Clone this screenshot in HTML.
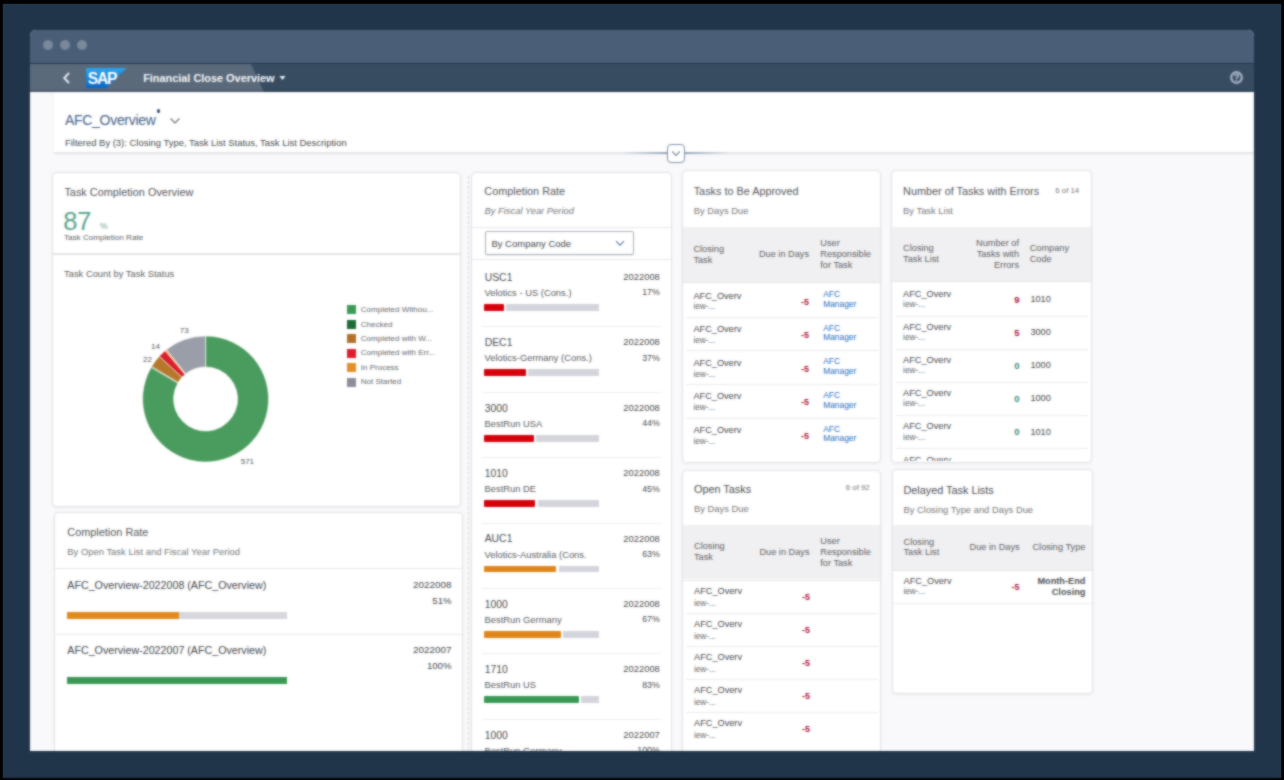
<!DOCTYPE html>
<html><head><meta charset="utf-8">
<style>
*{margin:0;padding:0;box-sizing:border-box}
html,body{width:1284px;height:780px;overflow:hidden;background:#000;font-family:"Liberation Sans",sans-serif;position:relative}
.a{position:absolute}
.t{position:absolute;white-space:nowrap;line-height:1}
.card{position:absolute;background:#fff;border-radius:4px;box-shadow:0 0 0 1px #e3e3e7,0 1px 4px rgba(0,0,0,.09);overflow:hidden}
</style></head>
<body>

<div class="a" style="left:0;top:0;width:1284px;height:780px">
<div class="a" style="left:3px;top:4px;width:1278px;height:774px;background:#22364b;"></div>
<div class="a" style="left:30px;top:30px;width:1224px;height:721px;background:#f9f9fb;border-radius:6px 6px 0 0;"></div>
<div class="a" style="left:30px;top:30px;width:1224px;height:33px;background:#4b5f77;border-radius:6px 6px 0 0;"></div>
<div class="a" style="left:43px;top:40px;width:10px;height:10px;border-radius:50%;background:#7a899b"></div>
<div class="a" style="left:60px;top:40px;width:10px;height:10px;border-radius:50%;background:#7a899b"></div>
<div class="a" style="left:76.5px;top:40px;width:10px;height:10px;border-radius:50%;background:#7a899b"></div>
<div class="a" style="left:30px;top:62.8px;width:1224px;height:1.5px;background:#243458;"></div>
<div class="a" style="left:30px;top:64px;width:1224px;height:28px;background:#384c62;"></div>
<div class="a" style="left:30px;top:64px;width:240px;height:28px;background:#5b6a7c;clip-path:polygon(0 0,221px 0,234px 28px,0 28px)"></div>
<div class="a" style="left:30px;top:90px;width:1224px;height:2px;background:rgba(20,30,50,0.22);"></div>
<svg class="a" style="left:60px;top:70px" width="14" height="16" viewBox="0 0 14 16"><path d="M9 3 L4.3 8 L9 13" fill="none" stroke="#dfe6ee" stroke-width="2.1"/></svg>
<svg class="a" style="left:86.3px;top:67.5px" width="42" height="21" viewBox="0 0 42 21">
<defs><linearGradient id="sapg" x1="0" y1="0" x2="0" y2="1"><stop offset="0" stop-color="#2aa6f0"/><stop offset="1" stop-color="#0b66c6"/></linearGradient></defs>
<polygon points="0,0 40.5,0 20.3,20.2 0,20.2" fill="url(#sapg)"/>
<text x="1.8" y="16.3" font-family="Liberation Sans" font-weight="bold" font-size="15.6" fill="#fff" letter-spacing="-1.2">SAP</text>
</svg>
<div class="t" style="top:72.88px;font-size:10.9px;color:#f4f6f8;font-weight:bold;left:143.20px;">Financial Close Overview</div>
<svg class="a" style="left:279px;top:75.5px" width="7" height="5" viewBox="0 0 7 5"><polygon points="0.5,0 6.5,0 3.5,4" fill="#e8eef4"/></svg>
<svg class="a" style="left:1228.8px;top:70.1px" width="15" height="15" viewBox="0 0 15 15"><circle cx="7.5" cy="7.5" r="5.3" fill="none" stroke="#a3b1c4" stroke-width="2.3"/><path d="M5.4 6.2 Q5.6 4.4 7.5 4.4 Q9.5 4.5 9.4 6 Q9.3 7.2 7.5 7.8 L7.5 9" fill="none" stroke="#a3b1c4" stroke-width="1.6"/><circle cx="7.5" cy="10.6" r="1" fill="#a3b1c4"/></svg>
<div class="a" style="left:54px;top:92px;width:1199px;height:60px;background:#ffffff;box-shadow:0 1px 1px rgba(0,0,0,.10);"></div>
<div class="t" style="top:113.32px;font-size:14px;color:#46638a;letter-spacing:-0.3px;left:65.00px;">AFC_Overview</div>
<div class="a" style="left:156.5px;top:109.3px;width:3.6px;height:3.6px;border-radius:50%;background:#2f4d72"></div>
<svg class="a" style="left:169px;top:117px" width="12" height="8" viewBox="0 0 12 8"><path d="M1.5 1.5 L6 6 L10.5 1.5" fill="none" stroke="#6a7480" stroke-width="1.2"/></svg>
<div class="t" style="top:137.56px;font-size:9.45px;color:#4a4e52;left:65.00px;">Filtered By (3): Closing Type, Task List Status, Task List Description</div>
<div class="a" style="left:54px;top:152px;width:1200px;height:1px;background:#e2e3e6;"></div>
<div class="a" style="left:54px;top:153px;width:1200px;height:1.5px;background:rgba(0,0,0,0.035);"></div>
<div class="a" style="left:622px;top:152px;width:108px;height:1.5px;background:linear-gradient(90deg,rgba(143,160,181,0),rgba(143,160,181,0.9) 40%,rgba(143,160,181,0.9) 60%,rgba(143,160,181,0))"></div>
<div class="a" style="left:667px;top:144px;width:18px;height:18.5px;border:1.6px solid #8193a8;border-radius:4px;background:#fff"></div>
<svg class="a" style="left:670px;top:149.8px" width="12" height="8" viewBox="0 0 12 8"><path d="M2.2 1.5 L6 5.3 L9.8 1.5" fill="none" stroke="#7d8a9a" stroke-width="1.2"/></svg>
<div class="card" style="left:53px;top:173px;width:407px;height:333px"></div>
<div class="t" style="top:187.38px;font-size:10.9px;color:#55585c;left:64.40px;">Task Completion Overview</div>
<div class="t" style="top:209.01px;font-size:25.5px;color:#5ba58d;left:63.20px;">87</div>
<div class="t" style="top:222.00px;font-size:8.5px;color:#6aa895;left:100.00px;">%</div>
<div class="t" style="top:234.49px;font-size:8.1px;color:#606366;left:64.00px;">Task Completion Rate</div>
<div class="a" style="left:53px;top:253px;width:407px;height:1.5px;background:#e4e4e6;"></div>
<div class="t" style="top:268.58px;font-size:9.4px;color:#606366;left:64.00px;">Task Count by Task Status</div>
<svg class="a" style="left:53px;top:173px" width="407" height="333"><path d="M152.60 163.00 A63 63 0 1 1 98.09 194.42 L124.91 209.96 A32 32 0 1 0 152.60 194.00 Z" fill="#4a9b5f" stroke="#fff" stroke-width="0.6"/><path d="M98.09 194.42 A63 63 0 0 1 98.68 193.42 L125.21 209.45 A32 32 0 0 0 124.91 209.96 Z" fill="#2a6d3f" stroke="#fff" stroke-width="0.6"/><path d="M98.68 193.42 A63 63 0 0 1 106.30 183.28 L129.08 204.30 A32 32 0 0 0 125.21 209.45 Z" fill="#b5782a" stroke="#fff" stroke-width="0.6"/><path d="M106.30 183.28 A63 63 0 0 1 112.15 177.70 L132.06 201.47 A32 32 0 0 0 129.08 204.30 Z" fill="#d91f2a" stroke="#fff" stroke-width="0.6"/><path d="M112.15 177.70 A63 63 0 0 1 113.50 176.60 L132.74 200.91 A32 32 0 0 0 132.06 201.47 Z" fill="#e3a04a" stroke="#fff" stroke-width="0.6"/><path d="M113.50 176.60 A63 63 0 0 1 152.60 163.00 L152.60 194.00 A32 32 0 0 0 132.74 200.91 Z" fill="#9a9ea8" stroke="#fff" stroke-width="0.6"/></svg>
<div class="t" style="top:327.24px;font-size:8px;color:#55585c;left:184.20px;transform:translateX(-50%);">73</div>
<div class="t" style="top:342.54px;font-size:8px;color:#55585c;left:155.40px;transform:translateX(-50%);">14</div>
<div class="t" style="top:355.94px;font-size:8px;color:#55585c;left:147.40px;transform:translateX(-50%);">22</div>
<div class="t" style="top:458.24px;font-size:8px;color:#55585c;left:247.40px;transform:translateX(-50%);">571</div>
<div class="a" style="left:347px;top:305.1px;width:9.399999999999977px;height:9.399999999999977px;background:#3d9a57;"></div>
<div class="t" style="top:306.04px;font-size:8px;color:#67696c;left:360.80px;">Completed Withou...</div>
<div class="a" style="left:347px;top:319.6px;width:9.399999999999977px;height:9.399999999999977px;background:#1f6a3a;"></div>
<div class="t" style="top:320.52px;font-size:8px;color:#67696c;left:360.80px;">Checked</div>
<div class="a" style="left:347px;top:334.1px;width:9.399999999999977px;height:9.399999999999977px;background:#b3702a;"></div>
<div class="t" style="top:335.00px;font-size:8px;color:#67696c;left:360.80px;">Completed with W...</div>
<div class="a" style="left:347px;top:348.5px;width:9.399999999999977px;height:9.399999999999977px;background:#e01d2c;"></div>
<div class="t" style="top:349.48px;font-size:8px;color:#67696c;left:360.80px;">Completed with Err...</div>
<div class="a" style="left:347px;top:363.0px;width:9.399999999999977px;height:9.399999999999977px;background:#e3902a;"></div>
<div class="t" style="top:363.96px;font-size:8px;color:#67696c;left:360.80px;">In Process</div>
<div class="a" style="left:347px;top:377.5px;width:9.399999999999977px;height:9.399999999999977px;background:#8b8e98;"></div>
<div class="t" style="top:378.44px;font-size:8px;color:#67696c;left:360.80px;">Not Started</div>
<div class="card" style="left:55px;top:513px;width:407px;height:260px"></div>
<div class="t" style="top:526.68px;font-size:10.9px;color:#55585c;left:67.30px;">Completion Rate</div>
<div class="t" style="top:546.97px;font-size:9.43px;color:#77797c;left:67.30px;">By Open Task List and Fiscal Year Period</div>
<div class="a" style="left:55px;top:568px;width:407px;height:1px;background:#e8e8ea;"></div>
<div class="t" style="top:579.57px;font-size:10.7px;color:#46494d;left:67.30px;">AFC_Overview-2022008 (AFC_Overview)</div>
<div class="t" style="top:580.15px;font-size:9.9px;color:#46494d;right:832.50px;">2022008</div>
<div class="t" style="top:596.29px;font-size:9.6px;color:#46494d;right:832.50px;">51%</div>
<div class="a" style="left:67px;top:611.5px;width:220px;height:7.2000000000000455px;background:#d7d7de;"></div>
<div class="a" style="left:67px;top:611.5px;width:111.9px;height:7.2000000000000455px;background:#e08a1f;"></div>
<div class="a" style="left:55px;top:633.5px;width:407px;height:1.0px;background:#ececee;"></div>
<div class="t" style="top:644.57px;font-size:10.7px;color:#46494d;left:67.30px;">AFC_Overview-2022007 (AFC_Overview)</div>
<div class="t" style="top:645.15px;font-size:9.9px;color:#46494d;right:832.50px;">2022007</div>
<div class="t" style="top:661.29px;font-size:9.6px;color:#46494d;right:832.50px;">100%</div>
<div class="a" style="left:67px;top:676.5px;width:220px;height:7.2000000000000455px;background:#d7d7de;"></div>
<div class="a" style="left:67px;top:676.5px;width:219.60000000000002px;height:7.2000000000000455px;background:#3a9a55;"></div>
<div class="card" style="left:472px;top:172.5px;width:199px;height:600px"></div>
<div class="t" style="top:185.90px;font-size:10.85px;color:#55585c;left:484.30px;">Completion Rate</div>
<div class="t" style="top:206.08px;font-size:9.4px;color:#77797c;font-style:italic;left:484.50px;">By Fiscal Year Period</div>
<div class="a" style="left:472px;top:227px;width:199px;height:1px;background:#e8e8ea;"></div>
<div class="a" style="left:484.5px;top:230.8px;width:149.5px;height:24.4px;border:1px solid #a9b0b8;border-radius:2px;box-shadow:0 1px 1px rgba(0,0,0,.08)"></div>
<div class="t" style="top:238.53px;font-size:9.5px;color:#46494d;left:491.40px;">By Company Code</div>
<svg class="a" style="left:615px;top:240px" width="10" height="7" viewBox="0 0 10 7"><path d="M1 1.2 L5 5.2 L9 1.2" fill="none" stroke="#5a7e9e" stroke-width="1.2"/></svg>
<div class="a" style="left:472px;top:259px;width:199px;height:1px;background:#e8e8ea;"></div>
<div class="t" style="top:272.71px;font-size:10.4px;color:#46494d;left:484.70px;">USC1</div>
<div class="t" style="top:272.08px;font-size:9.4px;color:#46494d;right:624.20px;">2022008</div>
<div class="t" style="top:287.98px;font-size:9.4px;color:#55585c;left:484.50px;">Velotics - US (Cons.)</div>
<div class="t" style="top:288.36px;font-size:8.8px;color:#46494d;right:624.20px;">17%</div>
<div class="a" style="left:506px;top:304.0px;width:92.5px;height:6.899999999999977px;background:#d5d5dc;"></div>
<div class="a" style="left:484.2px;top:304.0px;width:19.80000000000001px;height:6.899999999999977px;background:#d6000c;border-radius:1px;"></div>
<div class="a" style="left:482px;top:326.3px;width:179px;height:1.0px;background:#eeeef0;"></div>
<div class="t" style="top:338.11px;font-size:10.4px;color:#46494d;left:484.70px;">DEC1</div>
<div class="t" style="top:337.48px;font-size:9.4px;color:#46494d;right:624.20px;">2022008</div>
<div class="t" style="top:353.38px;font-size:9.4px;color:#55585c;left:484.50px;">Velotics-Germany (Cons.)</div>
<div class="t" style="top:353.76px;font-size:8.8px;color:#46494d;right:624.20px;">37%</div>
<div class="a" style="left:528px;top:369.4px;width:70.5px;height:6.899999999999977px;background:#d5d5dc;"></div>
<div class="a" style="left:484.2px;top:369.4px;width:41.80000000000001px;height:6.899999999999977px;background:#d6000c;border-radius:1px;"></div>
<div class="a" style="left:482px;top:391.70000000000005px;width:179px;height:1.0px;background:#eeeef0;"></div>
<div class="t" style="top:403.51px;font-size:10.4px;color:#46494d;left:484.70px;">3000</div>
<div class="t" style="top:402.88px;font-size:9.4px;color:#46494d;right:624.20px;">2022008</div>
<div class="t" style="top:418.78px;font-size:9.4px;color:#55585c;left:484.50px;">BestRun USA</div>
<div class="t" style="top:419.16px;font-size:8.8px;color:#46494d;right:624.20px;">44%</div>
<div class="a" style="left:536px;top:434.8px;width:62.5px;height:6.899999999999977px;background:#d5d5dc;"></div>
<div class="a" style="left:484.2px;top:434.8px;width:49.80000000000001px;height:6.899999999999977px;background:#d6000c;border-radius:1px;"></div>
<div class="a" style="left:482px;top:457.1px;width:179px;height:1.0px;background:#eeeef0;"></div>
<div class="t" style="top:468.91px;font-size:10.4px;color:#46494d;left:484.70px;">1010</div>
<div class="t" style="top:468.28px;font-size:9.4px;color:#46494d;right:624.20px;">2022008</div>
<div class="t" style="top:484.18px;font-size:9.4px;color:#55585c;left:484.50px;">BestRun DE</div>
<div class="t" style="top:484.56px;font-size:8.8px;color:#46494d;right:624.20px;">45%</div>
<div class="a" style="left:537.5px;top:500.20000000000005px;width:61.0px;height:6.899999999999977px;background:#d5d5dc;"></div>
<div class="a" style="left:484.2px;top:500.20000000000005px;width:51.30000000000001px;height:6.899999999999977px;background:#d6000c;border-radius:1px;"></div>
<div class="a" style="left:482px;top:522.5px;width:179px;height:1.0px;background:#eeeef0;"></div>
<div class="t" style="top:534.31px;font-size:10.4px;color:#46494d;left:484.70px;">AUC1</div>
<div class="t" style="top:533.68px;font-size:9.4px;color:#46494d;right:624.20px;">2022008</div>
<div class="t" style="top:549.58px;font-size:9.4px;color:#55585c;left:484.50px;">Velotics-Australia (Cons.</div>
<div class="t" style="top:549.96px;font-size:8.8px;color:#46494d;right:624.20px;">63%</div>
<div class="a" style="left:558.5px;top:565.6px;width:40.0px;height:6.899999999999977px;background:#d5d5dc;"></div>
<div class="a" style="left:484.2px;top:565.6px;width:72.30000000000001px;height:6.899999999999977px;background:#e0861a;border-radius:1px;"></div>
<div class="a" style="left:482px;top:587.9000000000001px;width:179px;height:1.0px;background:#eeeef0;"></div>
<div class="t" style="top:599.71px;font-size:10.4px;color:#46494d;left:484.70px;">1000</div>
<div class="t" style="top:599.08px;font-size:9.4px;color:#46494d;right:624.20px;">2022008</div>
<div class="t" style="top:614.98px;font-size:9.4px;color:#55585c;left:484.50px;">BestRun Germany</div>
<div class="t" style="top:615.36px;font-size:8.8px;color:#46494d;right:624.20px;">67%</div>
<div class="a" style="left:563px;top:631.0px;width:35.5px;height:6.899999999999977px;background:#d5d5dc;"></div>
<div class="a" style="left:484.2px;top:631.0px;width:76.80000000000001px;height:6.899999999999977px;background:#e0861a;border-radius:1px;"></div>
<div class="a" style="left:482px;top:653.3px;width:179px;height:1.0px;background:#eeeef0;"></div>
<div class="t" style="top:665.11px;font-size:10.4px;color:#46494d;left:484.70px;">1710</div>
<div class="t" style="top:664.48px;font-size:9.4px;color:#46494d;right:624.20px;">2022008</div>
<div class="t" style="top:680.38px;font-size:9.4px;color:#55585c;left:484.50px;">BestRun US</div>
<div class="t" style="top:680.76px;font-size:8.8px;color:#46494d;right:624.20px;">83%</div>
<div class="a" style="left:581px;top:696.4000000000001px;width:17.5px;height:6.899999999999864px;background:#d5d5dc;"></div>
<div class="a" style="left:484.2px;top:696.4000000000001px;width:94.80000000000001px;height:6.899999999999864px;background:#3a9a55;border-radius:1px;"></div>
<div class="a" style="left:482px;top:718.7px;width:179px;height:1.0px;background:#eeeef0;"></div>
<div class="t" style="top:730.51px;font-size:10.4px;color:#46494d;left:484.70px;">1000</div>
<div class="t" style="top:729.88px;font-size:9.4px;color:#46494d;right:624.20px;">2022007</div>
<div class="t" style="top:745.78px;font-size:9.4px;color:#55585c;left:484.50px;">BestRun Germany</div>
<div class="t" style="top:746.16px;font-size:8.8px;color:#46494d;right:624.20px;">100%</div>
<div class="a" style="left:601px;top:761.8000000000001px;width:-2.5px;height:6.899999999999977px;background:#d5d5dc;"></div>
<div class="a" style="left:484.2px;top:761.8000000000001px;width:114.80000000000001px;height:6.899999999999977px;background:#3a9a55;border-radius:1px;"></div>
<div class="a" style="left:482px;top:784.1000000000001px;width:179px;height:1.0px;background:#eeeef0;"></div>
<div class="card" style="left:682.5px;top:171px;width:197.7px;height:291px"></div>
<div class="t" style="top:185.50px;font-size:10.85px;color:#55585c;left:693.70px;">Tasks to Be Approved</div>
<div class="t" style="top:206.08px;font-size:9.4px;color:#77797c;left:693.70px;">By Days Due</div>
<div class="a" style="left:682.5px;top:226.5px;width:197.70000000000005px;height:56.0px;background:#f0f0f2;"></div>
<div class="a" style="left:682.5px;top:282px;width:197.70000000000005px;height:1px;background:#e4e4e8;"></div>
<div class="t" style="top:244.68px;font-size:9.2px;color:#5f6266;left:693.40px;">Closing</div>
<div class="t" style="top:255.68px;font-size:9.2px;color:#5f6266;left:693.40px;">Task</div>
<div class="t" style="top:250.18px;font-size:9.2px;color:#5f6266;right:475.00px;">Due in Days</div>
<div class="t" style="top:238.68px;font-size:9.2px;color:#5f6266;left:820.30px;">User</div>
<div class="t" style="top:250.18px;font-size:9.2px;color:#5f6266;left:820.30px;">Responsible</div>
<div class="t" style="top:261.18px;font-size:9.2px;color:#5f6266;left:820.30px;">for Task</div>
<div class="t" style="top:291.68px;font-size:9.2px;color:#46494d;left:693.40px;">AFC_Overv</div>
<div class="t" style="top:303.45px;font-size:8.2px;color:#65686b;left:693.40px;">iew-...</div>
<div class="t" style="top:297.57px;font-size:9px;color:#b01840;font-weight:bold;right:475.00px;">-5</div>
<div class="t" style="top:290.25px;font-size:8.4px;color:#2a6fc4;left:823.20px;">AFC</div>
<div class="t" style="top:299.75px;font-size:8.4px;color:#2a6fc4;left:823.20px;">Manager</div>
<div class="a" style="left:686px;top:316.8px;width:192px;height:1.0px;background:#ececee;"></div>
<div class="t" style="top:325.28px;font-size:9.2px;color:#46494d;left:693.40px;">AFC_Overv</div>
<div class="t" style="top:337.05px;font-size:8.2px;color:#65686b;left:693.40px;">iew-...</div>
<div class="t" style="top:331.17px;font-size:9px;color:#b01840;font-weight:bold;right:475.00px;">-5</div>
<div class="t" style="top:323.85px;font-size:8.4px;color:#2a6fc4;left:823.20px;">AFC</div>
<div class="t" style="top:333.35px;font-size:8.4px;color:#2a6fc4;left:823.20px;">Manager</div>
<div class="a" style="left:686px;top:350.40000000000003px;width:192px;height:1.0px;background:#ececee;"></div>
<div class="t" style="top:358.88px;font-size:9.2px;color:#46494d;left:693.40px;">AFC_Overv</div>
<div class="t" style="top:370.65px;font-size:8.2px;color:#65686b;left:693.40px;">iew-...</div>
<div class="t" style="top:364.77px;font-size:9px;color:#b01840;font-weight:bold;right:475.00px;">-5</div>
<div class="t" style="top:357.45px;font-size:8.4px;color:#2a6fc4;left:823.20px;">AFC</div>
<div class="t" style="top:366.95px;font-size:8.4px;color:#2a6fc4;left:823.20px;">Manager</div>
<div class="a" style="left:686px;top:384.0px;width:192px;height:1.0px;background:#ececee;"></div>
<div class="t" style="top:392.48px;font-size:9.2px;color:#46494d;left:693.40px;">AFC_Overv</div>
<div class="t" style="top:404.25px;font-size:8.2px;color:#65686b;left:693.40px;">iew-...</div>
<div class="t" style="top:398.37px;font-size:9px;color:#b01840;font-weight:bold;right:475.00px;">-5</div>
<div class="t" style="top:391.05px;font-size:8.4px;color:#2a6fc4;left:823.20px;">AFC</div>
<div class="t" style="top:400.55px;font-size:8.4px;color:#2a6fc4;left:823.20px;">Manager</div>
<div class="a" style="left:686px;top:417.6px;width:192px;height:1.0px;background:#ececee;"></div>
<div class="t" style="top:426.08px;font-size:9.2px;color:#46494d;left:693.40px;">AFC_Overv</div>
<div class="t" style="top:437.85px;font-size:8.2px;color:#65686b;left:693.40px;">iew-...</div>
<div class="t" style="top:431.97px;font-size:9px;color:#b01840;font-weight:bold;right:475.00px;">-5</div>
<div class="t" style="top:424.65px;font-size:8.4px;color:#2a6fc4;left:823.20px;">AFC</div>
<div class="t" style="top:434.15px;font-size:8.4px;color:#2a6fc4;left:823.20px;">Manager</div>
<div class="card" style="left:892.3px;top:171px;width:199.2px;height:291px"></div>
<div class="a" style="left:0;top:0;width:1284px;height:780px;clip-path:inset(171px 192.5px 319.2px 892.3px)">
<div class="t" style="top:185.90px;font-size:10.85px;color:#55585c;left:903.10px;">Number of Tasks with Errors</div>
<div class="t" style="top:186.83px;font-size:7.8px;color:#77797c;right:204.80px;">6 of 14</div>
<div class="t" style="top:205.98px;font-size:9.4px;color:#77797c;left:903.10px;">By Task List</div>
<div class="a" style="left:892.3px;top:226.9px;width:199.20000000000005px;height:54.29999999999998px;background:#f0f0f2;"></div>
<div class="a" style="left:892.3px;top:281px;width:199.20000000000005px;height:1px;background:#e4e4e8;"></div>
<div class="t" style="top:244.48px;font-size:9.2px;color:#5f6266;left:903.10px;">Closing</div>
<div class="t" style="top:255.28px;font-size:9.2px;color:#5f6266;left:903.10px;">Task List</div>
<div class="t" style="top:239.38px;font-size:9.2px;color:#5f6266;right:265.00px;">Number of</div>
<div class="t" style="top:250.18px;font-size:9.2px;color:#5f6266;right:265.00px;">Tasks with</div>
<div class="t" style="top:261.38px;font-size:9.2px;color:#5f6266;right:265.00px;">Errors</div>
<div class="t" style="top:244.48px;font-size:9.2px;color:#5f6266;left:1029.70px;">Company</div>
<div class="t" style="top:255.28px;font-size:9.2px;color:#5f6266;left:1029.70px;">Code</div>
<div class="t" style="top:289.88px;font-size:9.2px;color:#46494d;left:903.10px;">AFC_Overv</div>
<div class="t" style="top:301.15px;font-size:8.2px;color:#65686b;left:903.10px;">iew-...</div>
<div class="t" style="top:295.04px;font-size:9.5px;color:#b01840;font-weight:bold;right:264.50px;">9</div>
<div class="t" style="top:295.18px;font-size:9.2px;color:#46494d;left:1030.40px;">1010</div>
<div class="a" style="left:896px;top:316.0px;width:192px;height:1.0px;background:#ececee;"></div>
<div class="t" style="top:322.98px;font-size:9.2px;color:#46494d;left:903.10px;">AFC_Overv</div>
<div class="t" style="top:334.25px;font-size:8.2px;color:#65686b;left:903.10px;">iew-...</div>
<div class="t" style="top:328.14px;font-size:9.5px;color:#b01840;font-weight:bold;right:264.50px;">5</div>
<div class="t" style="top:328.28px;font-size:9.2px;color:#46494d;left:1030.40px;">3000</div>
<div class="a" style="left:896px;top:349.1px;width:192px;height:1.0px;background:#ececee;"></div>
<div class="t" style="top:356.08px;font-size:9.2px;color:#46494d;left:903.10px;">AFC_Overv</div>
<div class="t" style="top:367.35px;font-size:8.2px;color:#65686b;left:903.10px;">iew-...</div>
<div class="t" style="top:361.24px;font-size:9.5px;color:#3d8a78;font-weight:bold;right:264.50px;">0</div>
<div class="t" style="top:361.38px;font-size:9.2px;color:#46494d;left:1030.40px;">1000</div>
<div class="a" style="left:896px;top:382.2px;width:192px;height:1.0px;background:#ececee;"></div>
<div class="t" style="top:389.18px;font-size:9.2px;color:#46494d;left:903.10px;">AFC_Overv</div>
<div class="t" style="top:400.45px;font-size:8.2px;color:#65686b;left:903.10px;">iew-...</div>
<div class="t" style="top:394.34px;font-size:9.5px;color:#3d8a78;font-weight:bold;right:264.50px;">0</div>
<div class="t" style="top:394.48px;font-size:9.2px;color:#46494d;left:1030.40px;">1000</div>
<div class="a" style="left:896px;top:415.3px;width:192px;height:1.0px;background:#ececee;"></div>
<div class="t" style="top:422.28px;font-size:9.2px;color:#46494d;left:903.10px;">AFC_Overv</div>
<div class="t" style="top:433.55px;font-size:8.2px;color:#65686b;left:903.10px;">iew-...</div>
<div class="t" style="top:427.44px;font-size:9.5px;color:#3d8a78;font-weight:bold;right:264.50px;">0</div>
<div class="t" style="top:427.58px;font-size:9.2px;color:#46494d;left:1030.40px;">1010</div>
<div class="a" style="left:896px;top:448.4px;width:192px;height:1.0px;background:#ececee;"></div>
<div class="t" style="top:456.38px;font-size:9.2px;color:#46494d;left:903.10px;">AFC_Overv</div>
<div class="t" style="top:466.65px;font-size:8.2px;color:#65686b;left:903.10px;">iew-...</div>
<div class="t" style="top:460.54px;font-size:9.5px;color:#3d8a78;font-weight:bold;right:264.50px;">0</div>
<div class="t" style="top:460.68px;font-size:9.2px;color:#46494d;left:1030.40px;">1000</div>
</div>
<div class="card" style="left:682.5px;top:470.5px;width:197.7px;height:300px"></div>
<div class="t" style="top:483.90px;font-size:10.85px;color:#4c4f53;left:694.00px;">Open Tasks</div>
<div class="t" style="top:484.33px;font-size:7.8px;color:#77797c;right:414.30px;">6 of 92</div>
<div class="t" style="top:504.18px;font-size:9.4px;color:#77797c;left:694.00px;">By Days Due</div>
<div class="a" style="left:682.5px;top:525.3px;width:197.70000000000005px;height:54.200000000000045px;background:#f0f0f2;"></div>
<div class="a" style="left:682.5px;top:579.5px;width:197.70000000000005px;height:1.0px;background:#e4e4e8;"></div>
<div class="t" style="top:541.98px;font-size:9.2px;color:#5f6266;left:694.00px;">Closing</div>
<div class="t" style="top:552.88px;font-size:9.2px;color:#5f6266;left:694.00px;">Task</div>
<div class="t" style="top:547.68px;font-size:9.2px;color:#5f6266;right:474.50px;">Due in Days</div>
<div class="t" style="top:536.58px;font-size:9.2px;color:#5f6266;left:820.30px;">User</div>
<div class="t" style="top:547.68px;font-size:9.2px;color:#5f6266;left:820.30px;">Responsible</div>
<div class="t" style="top:559.18px;font-size:9.2px;color:#5f6266;left:820.30px;">for Task</div>
<div class="t" style="top:587.28px;font-size:9.2px;color:#46494d;left:694.00px;">AFC_Overv</div>
<div class="t" style="top:599.95px;font-size:8.2px;color:#65686b;left:694.00px;">iew-...</div>
<div class="t" style="top:593.17px;font-size:9px;color:#b01840;font-weight:bold;right:474.00px;">-5</div>
<div class="a" style="left:686px;top:612.6px;width:192px;height:1.0px;background:#ececee;"></div>
<div class="t" style="top:620.28px;font-size:9.2px;color:#46494d;left:694.00px;">AFC_Overv</div>
<div class="t" style="top:632.95px;font-size:8.2px;color:#65686b;left:694.00px;">iew-...</div>
<div class="t" style="top:626.17px;font-size:9px;color:#b01840;font-weight:bold;right:474.00px;">-5</div>
<div class="a" style="left:686px;top:645.6px;width:192px;height:1.0px;background:#ececee;"></div>
<div class="t" style="top:653.28px;font-size:9.2px;color:#46494d;left:694.00px;">AFC_Overv</div>
<div class="t" style="top:665.95px;font-size:8.2px;color:#65686b;left:694.00px;">iew-...</div>
<div class="t" style="top:659.17px;font-size:9px;color:#b01840;font-weight:bold;right:474.00px;">-5</div>
<div class="a" style="left:686px;top:678.6px;width:192px;height:1.0px;background:#ececee;"></div>
<div class="t" style="top:686.28px;font-size:9.2px;color:#46494d;left:694.00px;">AFC_Overv</div>
<div class="t" style="top:698.95px;font-size:8.2px;color:#65686b;left:694.00px;">iew-...</div>
<div class="t" style="top:692.17px;font-size:9px;color:#b01840;font-weight:bold;right:474.00px;">-5</div>
<div class="a" style="left:686px;top:711.6px;width:192px;height:1.0px;background:#ececee;"></div>
<div class="t" style="top:719.28px;font-size:9.2px;color:#46494d;left:694.00px;">AFC_Overv</div>
<div class="t" style="top:731.95px;font-size:8.2px;color:#65686b;left:694.00px;">iew-...</div>
<div class="t" style="top:725.17px;font-size:9px;color:#b01840;font-weight:bold;right:474.00px;">-5</div>
<div class="card" style="left:893px;top:469.5px;width:199px;height:223.5px"></div>
<div class="t" style="top:484.60px;font-size:10.85px;color:#4c4f53;left:903.50px;">Delayed Task Lists</div>
<div class="t" style="top:505.18px;font-size:9.4px;color:#77797c;left:903.50px;">By Closing Type and Days Due</div>
<div class="a" style="left:893px;top:525.3px;width:199px;height:44.700000000000045px;background:#f0f0f2;"></div>
<div class="a" style="left:893px;top:570px;width:199px;height:1px;background:#e4e4e8;"></div>
<div class="t" style="top:537.58px;font-size:9.2px;color:#5f6266;left:903.50px;">Closing</div>
<div class="t" style="top:548.08px;font-size:9.2px;color:#5f6266;left:903.50px;">Task List</div>
<div class="t" style="top:542.68px;font-size:9.2px;color:#5f6266;right:264.40px;">Due in Days</div>
<div class="t" style="top:542.68px;font-size:9.2px;color:#5f6266;right:198.60px;">Closing Type</div>
<div class="t" style="top:576.68px;font-size:9.2px;color:#46494d;left:903.50px;">AFC_Overv</div>
<div class="t" style="top:587.75px;font-size:8.2px;color:#65686b;left:903.50px;">iew-...</div>
<div class="t" style="top:582.77px;font-size:9px;color:#b01840;font-weight:bold;right:264.50px;">-5</div>
<div class="t" style="top:576.68px;font-size:9.2px;color:#505357;font-weight:bold;right:198.60px;">Month-End</div>
<div class="t" style="top:587.68px;font-size:9.2px;color:#505357;font-weight:bold;right:198.60px;">Closing</div>
<div class="a" style="left:893px;top:602.5px;width:199px;height:1.0px;background:#ececee;"></div>
<div class="a" style="left:467.5px;top:176px;width:1px;height:574px;border-left:1px dashed #d9d9df"></div>
<div class="a" style="left:3px;top:751px;width:1278px;height:27px;background:#22364b;"></div>
<div class="a" style="left:30px;top:751px;width:1224px;height:1px;background:#1c2e44;"></div>
<div class="a" style="left:0px;top:778px;width:1284px;height:2px;background:#000;"></div>
</div>
<div class="a" style="left:0;top:0;width:1284px;height:780px;filter:blur(0.8px);opacity:0.7">
<div class="a" style="left:3px;top:4px;width:1278px;height:774px;background:#22364b;"></div>
<div class="a" style="left:30px;top:30px;width:1224px;height:721px;background:#f9f9fb;border-radius:6px 6px 0 0;"></div>
<div class="a" style="left:30px;top:30px;width:1224px;height:33px;background:#4b5f77;border-radius:6px 6px 0 0;"></div>
<div class="a" style="left:43px;top:40px;width:10px;height:10px;border-radius:50%;background:#7a899b"></div>
<div class="a" style="left:60px;top:40px;width:10px;height:10px;border-radius:50%;background:#7a899b"></div>
<div class="a" style="left:76.5px;top:40px;width:10px;height:10px;border-radius:50%;background:#7a899b"></div>
<div class="a" style="left:30px;top:62.8px;width:1224px;height:1.5px;background:#243458;"></div>
<div class="a" style="left:30px;top:64px;width:1224px;height:28px;background:#384c62;"></div>
<div class="a" style="left:30px;top:64px;width:240px;height:28px;background:#5b6a7c;clip-path:polygon(0 0,221px 0,234px 28px,0 28px)"></div>
<div class="a" style="left:30px;top:90px;width:1224px;height:2px;background:rgba(20,30,50,0.22);"></div>
<svg class="a" style="left:60px;top:70px" width="14" height="16" viewBox="0 0 14 16"><path d="M9 3 L4.3 8 L9 13" fill="none" stroke="#dfe6ee" stroke-width="2.1"/></svg>
<svg class="a" style="left:86.3px;top:67.5px" width="42" height="21" viewBox="0 0 42 21">
<defs><linearGradient id="sapg" x1="0" y1="0" x2="0" y2="1"><stop offset="0" stop-color="#2aa6f0"/><stop offset="1" stop-color="#0b66c6"/></linearGradient></defs>
<polygon points="0,0 40.5,0 20.3,20.2 0,20.2" fill="url(#sapg)"/>
<text x="1.8" y="16.3" font-family="Liberation Sans" font-weight="bold" font-size="15.6" fill="#fff" letter-spacing="-1.2">SAP</text>
</svg>
<div class="t" style="top:72.88px;font-size:10.9px;color:#f4f6f8;font-weight:bold;left:143.20px;">Financial Close Overview</div>
<svg class="a" style="left:279px;top:75.5px" width="7" height="5" viewBox="0 0 7 5"><polygon points="0.5,0 6.5,0 3.5,4" fill="#e8eef4"/></svg>
<svg class="a" style="left:1228.8px;top:70.1px" width="15" height="15" viewBox="0 0 15 15"><circle cx="7.5" cy="7.5" r="5.3" fill="none" stroke="#a3b1c4" stroke-width="2.3"/><path d="M5.4 6.2 Q5.6 4.4 7.5 4.4 Q9.5 4.5 9.4 6 Q9.3 7.2 7.5 7.8 L7.5 9" fill="none" stroke="#a3b1c4" stroke-width="1.6"/><circle cx="7.5" cy="10.6" r="1" fill="#a3b1c4"/></svg>
<div class="a" style="left:54px;top:92px;width:1199px;height:60px;background:#ffffff;box-shadow:0 1px 1px rgba(0,0,0,.10);"></div>
<div class="t" style="top:113.32px;font-size:14px;color:#46638a;letter-spacing:-0.3px;left:65.00px;">AFC_Overview</div>
<div class="a" style="left:156.5px;top:109.3px;width:3.6px;height:3.6px;border-radius:50%;background:#2f4d72"></div>
<svg class="a" style="left:169px;top:117px" width="12" height="8" viewBox="0 0 12 8"><path d="M1.5 1.5 L6 6 L10.5 1.5" fill="none" stroke="#6a7480" stroke-width="1.2"/></svg>
<div class="t" style="top:137.56px;font-size:9.45px;color:#4a4e52;left:65.00px;">Filtered By (3): Closing Type, Task List Status, Task List Description</div>
<div class="a" style="left:54px;top:152px;width:1200px;height:1px;background:#e2e3e6;"></div>
<div class="a" style="left:54px;top:153px;width:1200px;height:1.5px;background:rgba(0,0,0,0.035);"></div>
<div class="a" style="left:622px;top:152px;width:108px;height:1.5px;background:linear-gradient(90deg,rgba(143,160,181,0),rgba(143,160,181,0.9) 40%,rgba(143,160,181,0.9) 60%,rgba(143,160,181,0))"></div>
<div class="a" style="left:667px;top:144px;width:18px;height:18.5px;border:1.6px solid #8193a8;border-radius:4px;background:#fff"></div>
<svg class="a" style="left:670px;top:149.8px" width="12" height="8" viewBox="0 0 12 8"><path d="M2.2 1.5 L6 5.3 L9.8 1.5" fill="none" stroke="#7d8a9a" stroke-width="1.2"/></svg>
<div class="card" style="left:53px;top:173px;width:407px;height:333px"></div>
<div class="t" style="top:187.38px;font-size:10.9px;color:#55585c;left:64.40px;">Task Completion Overview</div>
<div class="t" style="top:209.01px;font-size:25.5px;color:#5ba58d;left:63.20px;">87</div>
<div class="t" style="top:222.00px;font-size:8.5px;color:#6aa895;left:100.00px;">%</div>
<div class="t" style="top:234.49px;font-size:8.1px;color:#606366;left:64.00px;">Task Completion Rate</div>
<div class="a" style="left:53px;top:253px;width:407px;height:1.5px;background:#e4e4e6;"></div>
<div class="t" style="top:268.58px;font-size:9.4px;color:#606366;left:64.00px;">Task Count by Task Status</div>
<svg class="a" style="left:53px;top:173px" width="407" height="333"><path d="M152.60 163.00 A63 63 0 1 1 98.09 194.42 L124.91 209.96 A32 32 0 1 0 152.60 194.00 Z" fill="#4a9b5f" stroke="#fff" stroke-width="0.6"/><path d="M98.09 194.42 A63 63 0 0 1 98.68 193.42 L125.21 209.45 A32 32 0 0 0 124.91 209.96 Z" fill="#2a6d3f" stroke="#fff" stroke-width="0.6"/><path d="M98.68 193.42 A63 63 0 0 1 106.30 183.28 L129.08 204.30 A32 32 0 0 0 125.21 209.45 Z" fill="#b5782a" stroke="#fff" stroke-width="0.6"/><path d="M106.30 183.28 A63 63 0 0 1 112.15 177.70 L132.06 201.47 A32 32 0 0 0 129.08 204.30 Z" fill="#d91f2a" stroke="#fff" stroke-width="0.6"/><path d="M112.15 177.70 A63 63 0 0 1 113.50 176.60 L132.74 200.91 A32 32 0 0 0 132.06 201.47 Z" fill="#e3a04a" stroke="#fff" stroke-width="0.6"/><path d="M113.50 176.60 A63 63 0 0 1 152.60 163.00 L152.60 194.00 A32 32 0 0 0 132.74 200.91 Z" fill="#9a9ea8" stroke="#fff" stroke-width="0.6"/></svg>
<div class="t" style="top:327.24px;font-size:8px;color:#55585c;left:184.20px;transform:translateX(-50%);">73</div>
<div class="t" style="top:342.54px;font-size:8px;color:#55585c;left:155.40px;transform:translateX(-50%);">14</div>
<div class="t" style="top:355.94px;font-size:8px;color:#55585c;left:147.40px;transform:translateX(-50%);">22</div>
<div class="t" style="top:458.24px;font-size:8px;color:#55585c;left:247.40px;transform:translateX(-50%);">571</div>
<div class="a" style="left:347px;top:305.1px;width:9.399999999999977px;height:9.399999999999977px;background:#3d9a57;"></div>
<div class="t" style="top:306.04px;font-size:8px;color:#67696c;left:360.80px;">Completed Withou...</div>
<div class="a" style="left:347px;top:319.6px;width:9.399999999999977px;height:9.399999999999977px;background:#1f6a3a;"></div>
<div class="t" style="top:320.52px;font-size:8px;color:#67696c;left:360.80px;">Checked</div>
<div class="a" style="left:347px;top:334.1px;width:9.399999999999977px;height:9.399999999999977px;background:#b3702a;"></div>
<div class="t" style="top:335.00px;font-size:8px;color:#67696c;left:360.80px;">Completed with W...</div>
<div class="a" style="left:347px;top:348.5px;width:9.399999999999977px;height:9.399999999999977px;background:#e01d2c;"></div>
<div class="t" style="top:349.48px;font-size:8px;color:#67696c;left:360.80px;">Completed with Err...</div>
<div class="a" style="left:347px;top:363.0px;width:9.399999999999977px;height:9.399999999999977px;background:#e3902a;"></div>
<div class="t" style="top:363.96px;font-size:8px;color:#67696c;left:360.80px;">In Process</div>
<div class="a" style="left:347px;top:377.5px;width:9.399999999999977px;height:9.399999999999977px;background:#8b8e98;"></div>
<div class="t" style="top:378.44px;font-size:8px;color:#67696c;left:360.80px;">Not Started</div>
<div class="card" style="left:55px;top:513px;width:407px;height:260px"></div>
<div class="t" style="top:526.68px;font-size:10.9px;color:#55585c;left:67.30px;">Completion Rate</div>
<div class="t" style="top:546.97px;font-size:9.43px;color:#77797c;left:67.30px;">By Open Task List and Fiscal Year Period</div>
<div class="a" style="left:55px;top:568px;width:407px;height:1px;background:#e8e8ea;"></div>
<div class="t" style="top:579.57px;font-size:10.7px;color:#46494d;left:67.30px;">AFC_Overview-2022008 (AFC_Overview)</div>
<div class="t" style="top:580.15px;font-size:9.9px;color:#46494d;right:832.50px;">2022008</div>
<div class="t" style="top:596.29px;font-size:9.6px;color:#46494d;right:832.50px;">51%</div>
<div class="a" style="left:67px;top:611.5px;width:220px;height:7.2000000000000455px;background:#d7d7de;"></div>
<div class="a" style="left:67px;top:611.5px;width:111.9px;height:7.2000000000000455px;background:#e08a1f;"></div>
<div class="a" style="left:55px;top:633.5px;width:407px;height:1.0px;background:#ececee;"></div>
<div class="t" style="top:644.57px;font-size:10.7px;color:#46494d;left:67.30px;">AFC_Overview-2022007 (AFC_Overview)</div>
<div class="t" style="top:645.15px;font-size:9.9px;color:#46494d;right:832.50px;">2022007</div>
<div class="t" style="top:661.29px;font-size:9.6px;color:#46494d;right:832.50px;">100%</div>
<div class="a" style="left:67px;top:676.5px;width:220px;height:7.2000000000000455px;background:#d7d7de;"></div>
<div class="a" style="left:67px;top:676.5px;width:219.60000000000002px;height:7.2000000000000455px;background:#3a9a55;"></div>
<div class="card" style="left:472px;top:172.5px;width:199px;height:600px"></div>
<div class="t" style="top:185.90px;font-size:10.85px;color:#55585c;left:484.30px;">Completion Rate</div>
<div class="t" style="top:206.08px;font-size:9.4px;color:#77797c;font-style:italic;left:484.50px;">By Fiscal Year Period</div>
<div class="a" style="left:472px;top:227px;width:199px;height:1px;background:#e8e8ea;"></div>
<div class="a" style="left:484.5px;top:230.8px;width:149.5px;height:24.4px;border:1px solid #a9b0b8;border-radius:2px;box-shadow:0 1px 1px rgba(0,0,0,.08)"></div>
<div class="t" style="top:238.53px;font-size:9.5px;color:#46494d;left:491.40px;">By Company Code</div>
<svg class="a" style="left:615px;top:240px" width="10" height="7" viewBox="0 0 10 7"><path d="M1 1.2 L5 5.2 L9 1.2" fill="none" stroke="#5a7e9e" stroke-width="1.2"/></svg>
<div class="a" style="left:472px;top:259px;width:199px;height:1px;background:#e8e8ea;"></div>
<div class="t" style="top:272.71px;font-size:10.4px;color:#46494d;left:484.70px;">USC1</div>
<div class="t" style="top:272.08px;font-size:9.4px;color:#46494d;right:624.20px;">2022008</div>
<div class="t" style="top:287.98px;font-size:9.4px;color:#55585c;left:484.50px;">Velotics - US (Cons.)</div>
<div class="t" style="top:288.36px;font-size:8.8px;color:#46494d;right:624.20px;">17%</div>
<div class="a" style="left:506px;top:304.0px;width:92.5px;height:6.899999999999977px;background:#d5d5dc;"></div>
<div class="a" style="left:484.2px;top:304.0px;width:19.80000000000001px;height:6.899999999999977px;background:#d6000c;border-radius:1px;"></div>
<div class="a" style="left:482px;top:326.3px;width:179px;height:1.0px;background:#eeeef0;"></div>
<div class="t" style="top:338.11px;font-size:10.4px;color:#46494d;left:484.70px;">DEC1</div>
<div class="t" style="top:337.48px;font-size:9.4px;color:#46494d;right:624.20px;">2022008</div>
<div class="t" style="top:353.38px;font-size:9.4px;color:#55585c;left:484.50px;">Velotics-Germany (Cons.)</div>
<div class="t" style="top:353.76px;font-size:8.8px;color:#46494d;right:624.20px;">37%</div>
<div class="a" style="left:528px;top:369.4px;width:70.5px;height:6.899999999999977px;background:#d5d5dc;"></div>
<div class="a" style="left:484.2px;top:369.4px;width:41.80000000000001px;height:6.899999999999977px;background:#d6000c;border-radius:1px;"></div>
<div class="a" style="left:482px;top:391.70000000000005px;width:179px;height:1.0px;background:#eeeef0;"></div>
<div class="t" style="top:403.51px;font-size:10.4px;color:#46494d;left:484.70px;">3000</div>
<div class="t" style="top:402.88px;font-size:9.4px;color:#46494d;right:624.20px;">2022008</div>
<div class="t" style="top:418.78px;font-size:9.4px;color:#55585c;left:484.50px;">BestRun USA</div>
<div class="t" style="top:419.16px;font-size:8.8px;color:#46494d;right:624.20px;">44%</div>
<div class="a" style="left:536px;top:434.8px;width:62.5px;height:6.899999999999977px;background:#d5d5dc;"></div>
<div class="a" style="left:484.2px;top:434.8px;width:49.80000000000001px;height:6.899999999999977px;background:#d6000c;border-radius:1px;"></div>
<div class="a" style="left:482px;top:457.1px;width:179px;height:1.0px;background:#eeeef0;"></div>
<div class="t" style="top:468.91px;font-size:10.4px;color:#46494d;left:484.70px;">1010</div>
<div class="t" style="top:468.28px;font-size:9.4px;color:#46494d;right:624.20px;">2022008</div>
<div class="t" style="top:484.18px;font-size:9.4px;color:#55585c;left:484.50px;">BestRun DE</div>
<div class="t" style="top:484.56px;font-size:8.8px;color:#46494d;right:624.20px;">45%</div>
<div class="a" style="left:537.5px;top:500.20000000000005px;width:61.0px;height:6.899999999999977px;background:#d5d5dc;"></div>
<div class="a" style="left:484.2px;top:500.20000000000005px;width:51.30000000000001px;height:6.899999999999977px;background:#d6000c;border-radius:1px;"></div>
<div class="a" style="left:482px;top:522.5px;width:179px;height:1.0px;background:#eeeef0;"></div>
<div class="t" style="top:534.31px;font-size:10.4px;color:#46494d;left:484.70px;">AUC1</div>
<div class="t" style="top:533.68px;font-size:9.4px;color:#46494d;right:624.20px;">2022008</div>
<div class="t" style="top:549.58px;font-size:9.4px;color:#55585c;left:484.50px;">Velotics-Australia (Cons.</div>
<div class="t" style="top:549.96px;font-size:8.8px;color:#46494d;right:624.20px;">63%</div>
<div class="a" style="left:558.5px;top:565.6px;width:40.0px;height:6.899999999999977px;background:#d5d5dc;"></div>
<div class="a" style="left:484.2px;top:565.6px;width:72.30000000000001px;height:6.899999999999977px;background:#e0861a;border-radius:1px;"></div>
<div class="a" style="left:482px;top:587.9000000000001px;width:179px;height:1.0px;background:#eeeef0;"></div>
<div class="t" style="top:599.71px;font-size:10.4px;color:#46494d;left:484.70px;">1000</div>
<div class="t" style="top:599.08px;font-size:9.4px;color:#46494d;right:624.20px;">2022008</div>
<div class="t" style="top:614.98px;font-size:9.4px;color:#55585c;left:484.50px;">BestRun Germany</div>
<div class="t" style="top:615.36px;font-size:8.8px;color:#46494d;right:624.20px;">67%</div>
<div class="a" style="left:563px;top:631.0px;width:35.5px;height:6.899999999999977px;background:#d5d5dc;"></div>
<div class="a" style="left:484.2px;top:631.0px;width:76.80000000000001px;height:6.899999999999977px;background:#e0861a;border-radius:1px;"></div>
<div class="a" style="left:482px;top:653.3px;width:179px;height:1.0px;background:#eeeef0;"></div>
<div class="t" style="top:665.11px;font-size:10.4px;color:#46494d;left:484.70px;">1710</div>
<div class="t" style="top:664.48px;font-size:9.4px;color:#46494d;right:624.20px;">2022008</div>
<div class="t" style="top:680.38px;font-size:9.4px;color:#55585c;left:484.50px;">BestRun US</div>
<div class="t" style="top:680.76px;font-size:8.8px;color:#46494d;right:624.20px;">83%</div>
<div class="a" style="left:581px;top:696.4000000000001px;width:17.5px;height:6.899999999999864px;background:#d5d5dc;"></div>
<div class="a" style="left:484.2px;top:696.4000000000001px;width:94.80000000000001px;height:6.899999999999864px;background:#3a9a55;border-radius:1px;"></div>
<div class="a" style="left:482px;top:718.7px;width:179px;height:1.0px;background:#eeeef0;"></div>
<div class="t" style="top:730.51px;font-size:10.4px;color:#46494d;left:484.70px;">1000</div>
<div class="t" style="top:729.88px;font-size:9.4px;color:#46494d;right:624.20px;">2022007</div>
<div class="t" style="top:745.78px;font-size:9.4px;color:#55585c;left:484.50px;">BestRun Germany</div>
<div class="t" style="top:746.16px;font-size:8.8px;color:#46494d;right:624.20px;">100%</div>
<div class="a" style="left:601px;top:761.8000000000001px;width:-2.5px;height:6.899999999999977px;background:#d5d5dc;"></div>
<div class="a" style="left:484.2px;top:761.8000000000001px;width:114.80000000000001px;height:6.899999999999977px;background:#3a9a55;border-radius:1px;"></div>
<div class="a" style="left:482px;top:784.1000000000001px;width:179px;height:1.0px;background:#eeeef0;"></div>
<div class="card" style="left:682.5px;top:171px;width:197.7px;height:291px"></div>
<div class="t" style="top:185.50px;font-size:10.85px;color:#55585c;left:693.70px;">Tasks to Be Approved</div>
<div class="t" style="top:206.08px;font-size:9.4px;color:#77797c;left:693.70px;">By Days Due</div>
<div class="a" style="left:682.5px;top:226.5px;width:197.70000000000005px;height:56.0px;background:#f0f0f2;"></div>
<div class="a" style="left:682.5px;top:282px;width:197.70000000000005px;height:1px;background:#e4e4e8;"></div>
<div class="t" style="top:244.68px;font-size:9.2px;color:#5f6266;left:693.40px;">Closing</div>
<div class="t" style="top:255.68px;font-size:9.2px;color:#5f6266;left:693.40px;">Task</div>
<div class="t" style="top:250.18px;font-size:9.2px;color:#5f6266;right:475.00px;">Due in Days</div>
<div class="t" style="top:238.68px;font-size:9.2px;color:#5f6266;left:820.30px;">User</div>
<div class="t" style="top:250.18px;font-size:9.2px;color:#5f6266;left:820.30px;">Responsible</div>
<div class="t" style="top:261.18px;font-size:9.2px;color:#5f6266;left:820.30px;">for Task</div>
<div class="t" style="top:291.68px;font-size:9.2px;color:#46494d;left:693.40px;">AFC_Overv</div>
<div class="t" style="top:303.45px;font-size:8.2px;color:#65686b;left:693.40px;">iew-...</div>
<div class="t" style="top:297.57px;font-size:9px;color:#b01840;font-weight:bold;right:475.00px;">-5</div>
<div class="t" style="top:290.25px;font-size:8.4px;color:#2a6fc4;left:823.20px;">AFC</div>
<div class="t" style="top:299.75px;font-size:8.4px;color:#2a6fc4;left:823.20px;">Manager</div>
<div class="a" style="left:686px;top:316.8px;width:192px;height:1.0px;background:#ececee;"></div>
<div class="t" style="top:325.28px;font-size:9.2px;color:#46494d;left:693.40px;">AFC_Overv</div>
<div class="t" style="top:337.05px;font-size:8.2px;color:#65686b;left:693.40px;">iew-...</div>
<div class="t" style="top:331.17px;font-size:9px;color:#b01840;font-weight:bold;right:475.00px;">-5</div>
<div class="t" style="top:323.85px;font-size:8.4px;color:#2a6fc4;left:823.20px;">AFC</div>
<div class="t" style="top:333.35px;font-size:8.4px;color:#2a6fc4;left:823.20px;">Manager</div>
<div class="a" style="left:686px;top:350.40000000000003px;width:192px;height:1.0px;background:#ececee;"></div>
<div class="t" style="top:358.88px;font-size:9.2px;color:#46494d;left:693.40px;">AFC_Overv</div>
<div class="t" style="top:370.65px;font-size:8.2px;color:#65686b;left:693.40px;">iew-...</div>
<div class="t" style="top:364.77px;font-size:9px;color:#b01840;font-weight:bold;right:475.00px;">-5</div>
<div class="t" style="top:357.45px;font-size:8.4px;color:#2a6fc4;left:823.20px;">AFC</div>
<div class="t" style="top:366.95px;font-size:8.4px;color:#2a6fc4;left:823.20px;">Manager</div>
<div class="a" style="left:686px;top:384.0px;width:192px;height:1.0px;background:#ececee;"></div>
<div class="t" style="top:392.48px;font-size:9.2px;color:#46494d;left:693.40px;">AFC_Overv</div>
<div class="t" style="top:404.25px;font-size:8.2px;color:#65686b;left:693.40px;">iew-...</div>
<div class="t" style="top:398.37px;font-size:9px;color:#b01840;font-weight:bold;right:475.00px;">-5</div>
<div class="t" style="top:391.05px;font-size:8.4px;color:#2a6fc4;left:823.20px;">AFC</div>
<div class="t" style="top:400.55px;font-size:8.4px;color:#2a6fc4;left:823.20px;">Manager</div>
<div class="a" style="left:686px;top:417.6px;width:192px;height:1.0px;background:#ececee;"></div>
<div class="t" style="top:426.08px;font-size:9.2px;color:#46494d;left:693.40px;">AFC_Overv</div>
<div class="t" style="top:437.85px;font-size:8.2px;color:#65686b;left:693.40px;">iew-...</div>
<div class="t" style="top:431.97px;font-size:9px;color:#b01840;font-weight:bold;right:475.00px;">-5</div>
<div class="t" style="top:424.65px;font-size:8.4px;color:#2a6fc4;left:823.20px;">AFC</div>
<div class="t" style="top:434.15px;font-size:8.4px;color:#2a6fc4;left:823.20px;">Manager</div>
<div class="card" style="left:892.3px;top:171px;width:199.2px;height:291px"></div>
<div class="a" style="left:0;top:0;width:1284px;height:780px;clip-path:inset(171px 192.5px 319.2px 892.3px)">
<div class="t" style="top:185.90px;font-size:10.85px;color:#55585c;left:903.10px;">Number of Tasks with Errors</div>
<div class="t" style="top:186.83px;font-size:7.8px;color:#77797c;right:204.80px;">6 of 14</div>
<div class="t" style="top:205.98px;font-size:9.4px;color:#77797c;left:903.10px;">By Task List</div>
<div class="a" style="left:892.3px;top:226.9px;width:199.20000000000005px;height:54.29999999999998px;background:#f0f0f2;"></div>
<div class="a" style="left:892.3px;top:281px;width:199.20000000000005px;height:1px;background:#e4e4e8;"></div>
<div class="t" style="top:244.48px;font-size:9.2px;color:#5f6266;left:903.10px;">Closing</div>
<div class="t" style="top:255.28px;font-size:9.2px;color:#5f6266;left:903.10px;">Task List</div>
<div class="t" style="top:239.38px;font-size:9.2px;color:#5f6266;right:265.00px;">Number of</div>
<div class="t" style="top:250.18px;font-size:9.2px;color:#5f6266;right:265.00px;">Tasks with</div>
<div class="t" style="top:261.38px;font-size:9.2px;color:#5f6266;right:265.00px;">Errors</div>
<div class="t" style="top:244.48px;font-size:9.2px;color:#5f6266;left:1029.70px;">Company</div>
<div class="t" style="top:255.28px;font-size:9.2px;color:#5f6266;left:1029.70px;">Code</div>
<div class="t" style="top:289.88px;font-size:9.2px;color:#46494d;left:903.10px;">AFC_Overv</div>
<div class="t" style="top:301.15px;font-size:8.2px;color:#65686b;left:903.10px;">iew-...</div>
<div class="t" style="top:295.04px;font-size:9.5px;color:#b01840;font-weight:bold;right:264.50px;">9</div>
<div class="t" style="top:295.18px;font-size:9.2px;color:#46494d;left:1030.40px;">1010</div>
<div class="a" style="left:896px;top:316.0px;width:192px;height:1.0px;background:#ececee;"></div>
<div class="t" style="top:322.98px;font-size:9.2px;color:#46494d;left:903.10px;">AFC_Overv</div>
<div class="t" style="top:334.25px;font-size:8.2px;color:#65686b;left:903.10px;">iew-...</div>
<div class="t" style="top:328.14px;font-size:9.5px;color:#b01840;font-weight:bold;right:264.50px;">5</div>
<div class="t" style="top:328.28px;font-size:9.2px;color:#46494d;left:1030.40px;">3000</div>
<div class="a" style="left:896px;top:349.1px;width:192px;height:1.0px;background:#ececee;"></div>
<div class="t" style="top:356.08px;font-size:9.2px;color:#46494d;left:903.10px;">AFC_Overv</div>
<div class="t" style="top:367.35px;font-size:8.2px;color:#65686b;left:903.10px;">iew-...</div>
<div class="t" style="top:361.24px;font-size:9.5px;color:#3d8a78;font-weight:bold;right:264.50px;">0</div>
<div class="t" style="top:361.38px;font-size:9.2px;color:#46494d;left:1030.40px;">1000</div>
<div class="a" style="left:896px;top:382.2px;width:192px;height:1.0px;background:#ececee;"></div>
<div class="t" style="top:389.18px;font-size:9.2px;color:#46494d;left:903.10px;">AFC_Overv</div>
<div class="t" style="top:400.45px;font-size:8.2px;color:#65686b;left:903.10px;">iew-...</div>
<div class="t" style="top:394.34px;font-size:9.5px;color:#3d8a78;font-weight:bold;right:264.50px;">0</div>
<div class="t" style="top:394.48px;font-size:9.2px;color:#46494d;left:1030.40px;">1000</div>
<div class="a" style="left:896px;top:415.3px;width:192px;height:1.0px;background:#ececee;"></div>
<div class="t" style="top:422.28px;font-size:9.2px;color:#46494d;left:903.10px;">AFC_Overv</div>
<div class="t" style="top:433.55px;font-size:8.2px;color:#65686b;left:903.10px;">iew-...</div>
<div class="t" style="top:427.44px;font-size:9.5px;color:#3d8a78;font-weight:bold;right:264.50px;">0</div>
<div class="t" style="top:427.58px;font-size:9.2px;color:#46494d;left:1030.40px;">1010</div>
<div class="a" style="left:896px;top:448.4px;width:192px;height:1.0px;background:#ececee;"></div>
<div class="t" style="top:456.38px;font-size:9.2px;color:#46494d;left:903.10px;">AFC_Overv</div>
<div class="t" style="top:466.65px;font-size:8.2px;color:#65686b;left:903.10px;">iew-...</div>
<div class="t" style="top:460.54px;font-size:9.5px;color:#3d8a78;font-weight:bold;right:264.50px;">0</div>
<div class="t" style="top:460.68px;font-size:9.2px;color:#46494d;left:1030.40px;">1000</div>
</div>
<div class="card" style="left:682.5px;top:470.5px;width:197.7px;height:300px"></div>
<div class="t" style="top:483.90px;font-size:10.85px;color:#4c4f53;left:694.00px;">Open Tasks</div>
<div class="t" style="top:484.33px;font-size:7.8px;color:#77797c;right:414.30px;">6 of 92</div>
<div class="t" style="top:504.18px;font-size:9.4px;color:#77797c;left:694.00px;">By Days Due</div>
<div class="a" style="left:682.5px;top:525.3px;width:197.70000000000005px;height:54.200000000000045px;background:#f0f0f2;"></div>
<div class="a" style="left:682.5px;top:579.5px;width:197.70000000000005px;height:1.0px;background:#e4e4e8;"></div>
<div class="t" style="top:541.98px;font-size:9.2px;color:#5f6266;left:694.00px;">Closing</div>
<div class="t" style="top:552.88px;font-size:9.2px;color:#5f6266;left:694.00px;">Task</div>
<div class="t" style="top:547.68px;font-size:9.2px;color:#5f6266;right:474.50px;">Due in Days</div>
<div class="t" style="top:536.58px;font-size:9.2px;color:#5f6266;left:820.30px;">User</div>
<div class="t" style="top:547.68px;font-size:9.2px;color:#5f6266;left:820.30px;">Responsible</div>
<div class="t" style="top:559.18px;font-size:9.2px;color:#5f6266;left:820.30px;">for Task</div>
<div class="t" style="top:587.28px;font-size:9.2px;color:#46494d;left:694.00px;">AFC_Overv</div>
<div class="t" style="top:599.95px;font-size:8.2px;color:#65686b;left:694.00px;">iew-...</div>
<div class="t" style="top:593.17px;font-size:9px;color:#b01840;font-weight:bold;right:474.00px;">-5</div>
<div class="a" style="left:686px;top:612.6px;width:192px;height:1.0px;background:#ececee;"></div>
<div class="t" style="top:620.28px;font-size:9.2px;color:#46494d;left:694.00px;">AFC_Overv</div>
<div class="t" style="top:632.95px;font-size:8.2px;color:#65686b;left:694.00px;">iew-...</div>
<div class="t" style="top:626.17px;font-size:9px;color:#b01840;font-weight:bold;right:474.00px;">-5</div>
<div class="a" style="left:686px;top:645.6px;width:192px;height:1.0px;background:#ececee;"></div>
<div class="t" style="top:653.28px;font-size:9.2px;color:#46494d;left:694.00px;">AFC_Overv</div>
<div class="t" style="top:665.95px;font-size:8.2px;color:#65686b;left:694.00px;">iew-...</div>
<div class="t" style="top:659.17px;font-size:9px;color:#b01840;font-weight:bold;right:474.00px;">-5</div>
<div class="a" style="left:686px;top:678.6px;width:192px;height:1.0px;background:#ececee;"></div>
<div class="t" style="top:686.28px;font-size:9.2px;color:#46494d;left:694.00px;">AFC_Overv</div>
<div class="t" style="top:698.95px;font-size:8.2px;color:#65686b;left:694.00px;">iew-...</div>
<div class="t" style="top:692.17px;font-size:9px;color:#b01840;font-weight:bold;right:474.00px;">-5</div>
<div class="a" style="left:686px;top:711.6px;width:192px;height:1.0px;background:#ececee;"></div>
<div class="t" style="top:719.28px;font-size:9.2px;color:#46494d;left:694.00px;">AFC_Overv</div>
<div class="t" style="top:731.95px;font-size:8.2px;color:#65686b;left:694.00px;">iew-...</div>
<div class="t" style="top:725.17px;font-size:9px;color:#b01840;font-weight:bold;right:474.00px;">-5</div>
<div class="card" style="left:893px;top:469.5px;width:199px;height:223.5px"></div>
<div class="t" style="top:484.60px;font-size:10.85px;color:#4c4f53;left:903.50px;">Delayed Task Lists</div>
<div class="t" style="top:505.18px;font-size:9.4px;color:#77797c;left:903.50px;">By Closing Type and Days Due</div>
<div class="a" style="left:893px;top:525.3px;width:199px;height:44.700000000000045px;background:#f0f0f2;"></div>
<div class="a" style="left:893px;top:570px;width:199px;height:1px;background:#e4e4e8;"></div>
<div class="t" style="top:537.58px;font-size:9.2px;color:#5f6266;left:903.50px;">Closing</div>
<div class="t" style="top:548.08px;font-size:9.2px;color:#5f6266;left:903.50px;">Task List</div>
<div class="t" style="top:542.68px;font-size:9.2px;color:#5f6266;right:264.40px;">Due in Days</div>
<div class="t" style="top:542.68px;font-size:9.2px;color:#5f6266;right:198.60px;">Closing Type</div>
<div class="t" style="top:576.68px;font-size:9.2px;color:#46494d;left:903.50px;">AFC_Overv</div>
<div class="t" style="top:587.75px;font-size:8.2px;color:#65686b;left:903.50px;">iew-...</div>
<div class="t" style="top:582.77px;font-size:9px;color:#b01840;font-weight:bold;right:264.50px;">-5</div>
<div class="t" style="top:576.68px;font-size:9.2px;color:#505357;font-weight:bold;right:198.60px;">Month-End</div>
<div class="t" style="top:587.68px;font-size:9.2px;color:#505357;font-weight:bold;right:198.60px;">Closing</div>
<div class="a" style="left:893px;top:602.5px;width:199px;height:1.0px;background:#ececee;"></div>
<div class="a" style="left:467.5px;top:176px;width:1px;height:574px;border-left:1px dashed #d9d9df"></div>
<div class="a" style="left:3px;top:751px;width:1278px;height:27px;background:#22364b;"></div>
<div class="a" style="left:30px;top:751px;width:1224px;height:1px;background:#1c2e44;"></div>
<div class="a" style="left:0px;top:778px;width:1284px;height:2px;background:#000;"></div>
</div>
</body></html>
